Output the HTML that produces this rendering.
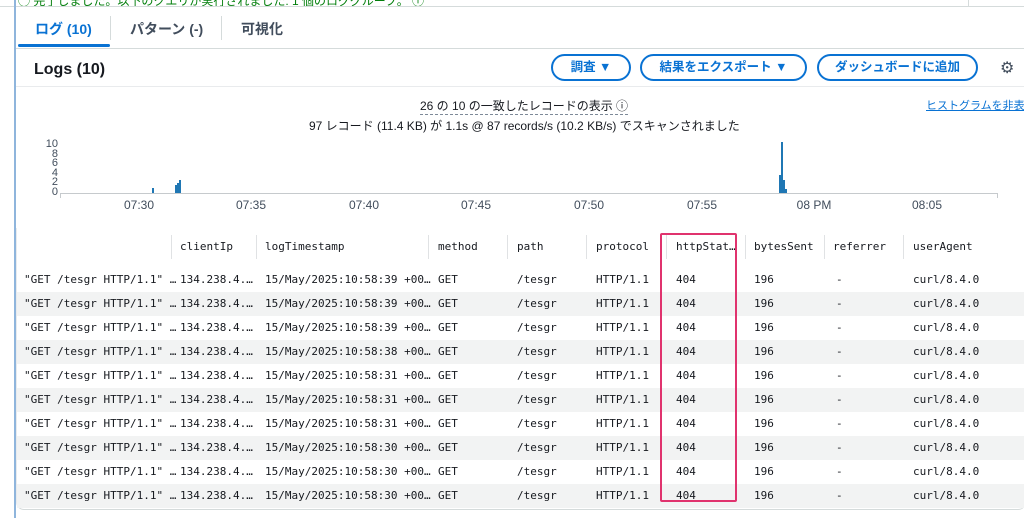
<!DOCTYPE html>
<html><head><meta charset="utf-8"><style>
*{margin:0;padding:0;box-sizing:border-box}
body{width:1024px;height:518px;background:#fff;position:relative;overflow:hidden;font-family:"Liberation Sans","Noto Sans CJK JP",sans-serif;color:#16191f}
.a{position:absolute;white-space:nowrap}
.mono{font-family:"DejaVu Sans Mono","Liberation Mono",monospace;font-size:11px;color:#16191f}
.btn{position:absolute;top:54px;height:27px;border:2px solid #0972d3;border-radius:14px;color:#0972d3;font-weight:bold;font-size:12.5px;text-align:center;line-height:23px}
.row{position:absolute;left:17px;width:1007px;height:24px}
.sep{position:absolute;top:235px;width:1px;height:24px;background:#e0e2e4}
.tl{position:absolute;top:198px;font-size:12px;color:#414d5c;transform:translateX(-50%)}
</style></head><body>
<div class="a" style="left:18px;top:-8px;font-size:12px;color:#037f0c">◯ 完了しました。以下のクエリが実行されました: 1 個のロググループ。 ⓘ</div>
<div class="a" style="left:0;top:6px;width:1024px;height:1px;background:#d5dbdb"></div>
<div class="a" style="left:968px;top:0;width:1px;height:6px;background:#d5dbdb"></div>
<div class="a" style="left:14px;top:0;width:2px;height:518px;background:#8fb5dc"></div>
<div class="a" style="left:35px;top:19px;font-size:14px;font-weight:bold;color:#0972d3">ログ (10)</div>
<div class="a" style="left:110px;top:16px;width:1px;height:24px;background:#d5dbdb"></div>
<div class="a" style="left:130px;top:19px;font-size:14px;font-weight:bold;color:#414d5c">パターン (-)</div>
<div class="a" style="left:221px;top:16px;width:1px;height:24px;background:#d5dbdb"></div>
<div class="a" style="left:241px;top:19px;font-size:14px;font-weight:bold;color:#414d5c">可視化</div>
<div class="a" style="left:18px;top:44px;width:92px;height:3px;background:#0972d3;border-radius:2px"></div>
<div class="a" style="left:16px;top:48px;width:1008px;height:1px;background:#d5dbdb"></div>
<div class="a" style="left:34px;top:61px;font-size:16px;font-weight:bold">Logs (10)</div>
<div class="btn" style="left:551px;width:80px">調査 ▼</div>
<div class="btn" style="left:640px;width:167px">結果をエクスポート ▼</div>
<div class="btn" style="left:817px;width:161px">ダッシュボードに追加</div>
<div class="a" style="left:1000px;top:58px;font-size:16px;color:#414d5c">⚙</div>
<div class="a" style="left:16px;top:86px;width:1008px;height:1px;background:#e9ebed"></div>
<div class="a" style="left:420px;top:97px;font-size:12px;border-bottom:1px dashed #7d8998">26 の 10 の一致したレコードの表示 ⓘ</div>
<div class="a" style="left:309px;top:117px;font-size:12px">97 レコード (11.4 KB) が 1.1s @ 87 records/s (10.2 KB/s) でスキャンされました</div>
<div class="a" style="left:926px;top:97px;font-size:11px;color:#0972d3;text-decoration:underline">ヒストグラムを非表示</div>
<div class="a" style="left:44px;top:140px;font-size:11px;line-height:9.5px;color:#414d5c;text-align:right;width:14px">10<br>8<br>6<br>4<br>2<br>0</div>
<div class="a" style="left:60px;top:193px;width:938px;height:1px;background:#c6cacd"></div>
<div class="a" style="left:60px;top:193px;width:1px;height:5px;background:#c6cacd"></div>
<div class="a" style="left:997px;top:193px;width:1px;height:5px;background:#c6cacd"></div>
<div class="a" style="left:152px;top:188px;width:2px;height:5px;background:#1f77b4"></div>
<div class="a" style="left:175px;top:185px;width:2px;height:8px;background:#1f77b4"></div>
<div class="a" style="left:177px;top:183px;width:2px;height:10px;background:#1f77b4"></div>
<div class="a" style="left:179px;top:180px;width:2px;height:13px;background:#1f77b4"></div>
<div class="a" style="left:781px;top:142px;width:2px;height:51px;background:#1f77b4"></div>
<div class="a" style="left:779px;top:175px;width:4px;height:18px;background:#1f77b4"></div>
<div class="a" style="left:783px;top:180px;width:2px;height:13px;background:#1f77b4"></div>
<div class="a" style="left:785px;top:189px;width:2px;height:4px;background:#1f77b4"></div>
<div class="tl" style="left:139px">07:30</div>
<div class="tl" style="left:251px">07:35</div>
<div class="tl" style="left:364px">07:40</div>
<div class="tl" style="left:476px">07:45</div>
<div class="tl" style="left:589px">07:50</div>
<div class="tl" style="left:702px">07:55</div>
<div class="tl" style="left:814px">08 PM</div>
<div class="tl" style="left:927px">08:05</div>
<div class="a" style="left:16px;top:228px;width:1010px;height:282px;border-bottom:1px solid #d5dbdb;border-left:1px solid #e9ebed;border-radius:0 0 8px 8px"></div>
<div class="sep" style="left:171px"></div><div class="sep" style="left:256px"></div><div class="sep" style="left:428px"></div><div class="sep" style="left:507px"></div><div class="sep" style="left:586px"></div><div class="sep" style="left:666px"></div><div class="sep" style="left:745px"></div><div class="sep" style="left:824px"></div><div class="sep" style="left:903px"></div>
<div class="a mono" style="top:240px;left:180px">clientIp</div>
<div class="a mono" style="top:240px;left:265px">logTimestamp</div>
<div class="a mono" style="top:240px;left:438px">method</div>
<div class="a mono" style="top:240px;left:517px">path</div>
<div class="a mono" style="top:240px;left:596px">protocol</div>
<div class="a mono" style="top:240px;left:676px">httpStat…</div>
<div class="a mono" style="top:240px;left:754px">bytesSent</div>
<div class="a mono" style="top:240px;left:833px">referrer</div>
<div class="a mono" style="top:240px;left:913px">userAgent</div>
<div id="rows"></div>
<script>
var ts=["39","39","39","38","31","31","31","30","30","30"],h="";
for(var i=0;i<10;i++){var t=268+i*24;
h+='<div class="row" style="top:'+t+'px;background:'+(i%2?'#f2f3f3':'#fff')+'"></div>';
var y=t+5;
function c(x,s){h+='<div class="a mono" style="top:'+y+'px;left:'+x+'px">'+s+'</div>';}
c(24,'"GET /tesgr HTTP/1.1" …');c(180,'134.238.4.…');c(265,'15/May/2025:10:58:'+ts[i]+' +00…');c(438,'GET');c(517,'/tesgr');c(596,'HTTP/1.1');c(676,'404');c(754,'196');c(836,'-');c(913,'curl/8.4.0');}
document.getElementById('rows').outerHTML=h;
</script>
<div class="a" style="left:660px;top:233px;width:77px;height:269px;border:2px solid #e0336e;border-radius:2px"></div>
</body></html>
